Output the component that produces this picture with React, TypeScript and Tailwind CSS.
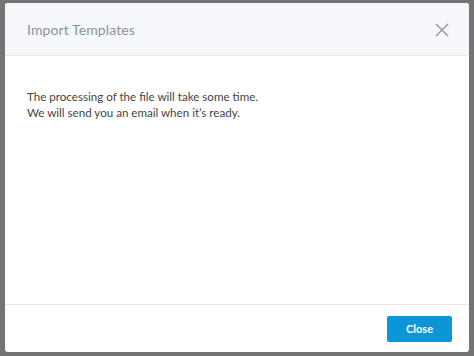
import React from "react";

export default function App() {
  return (
    <div className="w-[474px] h-[356px] bg-[#747474] overflow-hidden relative" style={{ fontFamily: 'Lato, "Noto Sans", sans-serif' }}>
      <div className="absolute left-[5px] top-[3px] w-[464px] h-[349px] bg-white rounded-[3px] flex flex-col overflow-hidden">
        <div className="h-[53px] shrink-0 bg-[#f5f7fa] border-b border-[#e9ecf0] flex items-center justify-between pl-[22px] pr-[20px]">
          <span className="text-[14px] text-[#8a939c] tracking-[0.1px]">Import Templates</span>
          <svg width="14" height="14" viewBox="0 0 14 14" className="mt-[1px]">
            <path d="M1 1 L13 13 M13 1 L1 13" stroke="#8d949b" strokeWidth="1.3" fill="none" />
          </svg>
        </div>
        <div className="flex-1 pl-[22px] pt-[33px] text-[11.6px] leading-[16px] text-[#444]">
          <p>The processing of the file will take some time.</p>
          <p>We will send you an email when it’s ready.</p>
        </div>
        <div className="h-[48px] shrink-0 border-t border-[#e6e8eb] flex items-start justify-end pr-[17px] pt-[11px]">
          <button className="w-[65px] h-[26px] rounded-[2px] bg-[#0a96d8] text-white text-[11px] font-bold">Close</button>
        </div>
      </div>
    </div>
  );
}
